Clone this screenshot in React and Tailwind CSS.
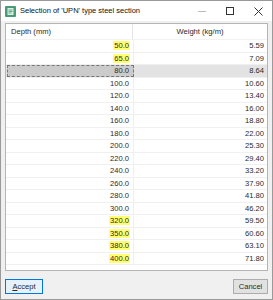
import React from "react";

const rows = [
  ["50.0", "5.59", true],
  ["65.0", "7.09", true],
  ["80.0", "8.64", false],
  ["100.0", "10.60", false],
  ["120.0", "13.40", false],
  ["140.0", "16.00", false],
  ["160.0", "18.80", false],
  ["180.0", "22.00", false],
  ["200.0", "25.30", false],
  ["220.0", "29.40", false],
  ["240.0", "33.20", false],
  ["260.0", "37.90", false],
  ["280.0", "41.80", false],
  ["300.0", "46.20", false],
  ["320.0", "59.50", true],
  ["350.0", "60.60", true],
  ["380.0", "63.10", true],
  ["400.0", "71.80", true],
];

const AppIcon = () => (
  <svg width="11" height="11" viewBox="0 0 11 11">
    <rect x="0" y="0" width="11" height="11" rx="1" fill="#4a9a78" />
    <rect x="2.5" y="2" width="6" height="7" fill="#d9efe3" />
    <path d="M3.5 4h4M3.5 5.5h4M3.5 7h3" stroke="#4a9a78" strokeWidth="0.8" />
  </svg>
);

const App = () => {
  return (
    <div
      className="w-[273px] h-[300px] bg-[#f0f0f0] border border-[#9a9a9a] flex flex-col text-[#2a2a2a]"
      style={{ fontFamily: '"Liberation Sans", Arial, sans-serif' }}
    >
      {/* title bar */}
      <div className="h-[20px] bg-white flex items-center pl-[4px] shrink-0">
        <AppIcon />
        <span className="ml-[4px] text-[7.5px] text-[#111]">Selection of 'UPN' type steel section</span>
        <div className="ml-auto flex items-center h-full">
          <div className="w-[28px] h-full flex items-center justify-center">
            <div className="w-[8px] h-px bg-[#bbb]" />
          </div>
          <div className="w-[28px] h-full flex items-center justify-center">
            <div className="w-[8px] h-[8px] border border-[#333]" />
          </div>
          <div className="w-[28px] h-full flex items-center justify-center">
            <svg width="9" height="9" viewBox="0 0 9 9">
              <path d="M0.5 0.5L8.5 8.5M8.5 0.5L0.5 8.5" stroke="#333" strokeWidth="1" />
            </svg>
          </div>
        </div>
      </div>

      {/* list */}
      <div className="mx-[4px] mt-[2px] h-[248px] bg-white border border-[#b5b5b5] flex flex-col text-[7.6px]">
        <div className="h-[16px] flex shrink-0 border-b border-[#f2f2f2]">
          <div className="w-[127px] pl-[5px] flex items-center border-r border-[#e5e5e5]">Depth (mm)</div>
          <div className="flex-1 flex items-center justify-center">Weight (kg/m)</div>
        </div>
        {rows.map(([d, w, hl], i) => {
          const sel = i === 2;
          return (
            <div
              key={d}
              className={"h-[12.5px] flex shrink-0 border-b border-[#f0f0f0] " + (sel ? "bg-[#e3e3e3]" : "")}
            >
              <div
                className={
                  "w-[127px] flex items-center justify-end pr-[3px] ml-[1px] " +
                  (sel ? "bg-[#cbcbcb] border border-dashed border-[#777]" : "border-r border-[#f0f0f0]")
                }
              >
                <span className={hl ? "bg-[#ffff70] px-[1px] leading-[9px]" : "px-[1px]"}>{d}</span>
              </div>
              <div className="flex-1 flex items-center justify-end pr-[3px]">{w}</div>
            </div>
          );
        })}
      </div>

      {/* buttons */}
      <div className="flex justify-between items-center px-[4px] mt-[8px] text-[7.6px]">
        <button className="w-[38px] h-[15px] bg-[#e5f1fb] border border-[#0078d7] flex items-center justify-center">
          <span>
            <span className="underline">A</span>ccept
          </span>
        </button>
        <button className="w-[35px] h-[15px] bg-[#e1e1e1] border border-[#adadad] flex items-center justify-center">
          Cancel
        </button>
      </div>
    </div>
  );
};

export default App;
